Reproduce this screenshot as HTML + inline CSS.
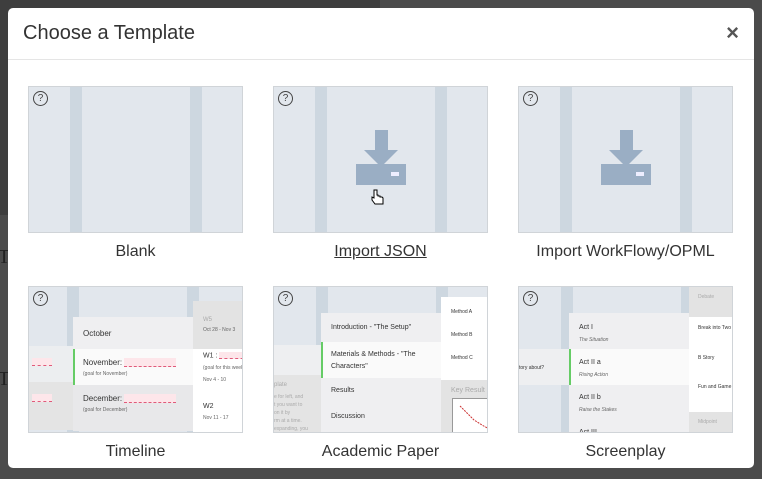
<!DOCTYPE html>
<html><head><meta charset="utf-8"><style>
*{box-sizing:border-box;margin:0;padding:0}
body{width:762px;height:479px;background:#4b4b4b;font-family:"Liberation Sans",sans-serif;position:relative;overflow:hidden}
.bgl{position:absolute;left:0;top:0;width:380px;height:215px;background:#3e3e3e}
.bgt{position:absolute;color:#222;font-family:"Liberation Serif",serif;font-size:20px}
.modal{position:absolute;left:8px;top:8px;width:746px;height:460px;background:#fff;border-radius:5px;overflow:hidden}
.hd{height:52px;border-bottom:1px solid #e5e5e5;position:relative}
.hd h1{font-weight:normal;font-size:20px;color:#333;position:absolute;left:15px;top:14px}
.x{position:absolute;right:15px;top:12px;font-size:22px;font-weight:bold;color:#555;line-height:26px}
.card{position:absolute;width:215px;height:147px;background:#e2e7ed;border:1px solid #d0d4d8;overflow:hidden}
.s{position:absolute;top:0;bottom:0;width:12px;background:#cdd7e0}
.q{position:absolute;left:4px;top:4px;width:15px;height:15px;border:1px solid #444;border-radius:50%;font-size:10px;text-align:center;line-height:13px;color:#444;z-index:5;background:transparent}
.lbl{position:absolute;width:215px;text-align:center;font-size:16px;color:#333}
.p{position:absolute;font-size:8px;color:#333;white-space:nowrap}
.sm{position:absolute;font-size:5px;color:#666;white-space:nowrap}
.pk{background:#fde6ea;border-bottom:1px dashed #e05a7a;display:inline-block;height:9px;vertical-align:middle}
</style></head><body>
<div class="bgl"></div>
<div class="bgt" style="left:-2px;top:246px">Th</div>
<div class="bgt" style="left:-2px;top:368px">Th</div>
<div class="modal">
 <div class="hd"><h1>Choose a Template</h1><div class="x">×</div></div>
</div>
<!-- Row 1 -->
<div class="card" style="left:28px;top:86px"><div class="q">?</div><div class="s" style="left:41px"></div><div class="s" style="left:161px"></div></div>
<div class="lbl" style="left:28px;top:243px">Blank</div>
<div class="card" style="left:273px;top:86px"><div class="q">?</div><div class="s" style="left:41px"></div><div class="s" style="left:161px"></div>
 <svg style="position:absolute;left:82px;top:43px" width="52" height="56"><path d="M19 0h13v20h10l-17 17l-17-17h11z" fill="#9aaec4"/><rect x="0" y="34" width="50" height="21" fill="#9aaec4"/><rect x="35" y="42" width="8" height="4" fill="#eef"/></svg>
 <svg style="position:absolute;left:96px;top:101px" width="16" height="18"><path d="M4 2v8l-2-1v3l3 4h8v-6l-1-1h-2v-1h-2v-1H7V2z" fill="#fff" stroke="#000" stroke-width="1"/></svg>
</div>
<div class="lbl" style="left:273px;top:243px;text-decoration:underline">Import JSON</div>
<div class="card" style="left:518px;top:86px"><div class="q">?</div><div class="s" style="left:41px"></div><div class="s" style="left:161px"></div>
 <svg style="position:absolute;left:82px;top:43px" width="52" height="56"><path d="M19 0h13v20h10l-17 17l-17-17h11z" fill="#9aaec4"/><rect x="0" y="34" width="50" height="21" fill="#9aaec4"/><rect x="35" y="42" width="8" height="4" fill="#eef"/></svg>
</div>
<div class="lbl" style="left:518px;top:243px">Import WorkFlowy/OPML</div>
<!-- Row 2 Timeline -->
<div class="card" style="left:28px;top:286px"><div class="q">?</div><div class="s" style="left:38px"></div><div class="s" style="left:158px"></div>
 <div style="position:absolute;left:0;top:59px;width:44px;height:36px;background:#eceef0"></div>
 <div style="position:absolute;left:0;top:95px;width:44px;height:48px;background:#e4e4e4"></div>
 <div style="position:absolute;left:3px;top:71px;width:20px;height:8px;background:#fde6ea;border-bottom:1px dashed #e05a7a"></div>
 <div style="position:absolute;left:3px;top:107px;width:20px;height:8px;background:#fde6ea;border-bottom:1px dashed #e05a7a"></div>
 <div style="position:absolute;left:44px;top:30px;width:120px;height:114px;background:#efeff1"></div>
 <div style="position:absolute;left:44px;top:62px;width:120px;height:36px;background:#fafafa;border-left:2px solid #6c6"></div>
 <div style="position:absolute;left:44px;top:98px;width:120px;height:46px;background:#e8e8ea"></div>
 <div class="p" style="left:54px;top:42px">October</div>
 <div class="p" style="left:54px;top:71px">November: <span class="pk" style="width:52px"></span></div>
 <div class="sm" style="left:54px;top:84px">(goal for November)</div>
 <div class="p" style="left:54px;top:107px">December: <span class="pk" style="width:52px"></span></div>
 <div class="sm" style="left:54px;top:120px">(goal for December)</div>
 <div style="position:absolute;left:164px;top:14px;width:51px;height:48px;background:#e3e3e3"></div>
 <div style="position:absolute;left:164px;top:62px;width:51px;height:85px;background:#fff;overflow:hidden">
  <div class="p" style="left:10px;top:3px;font-size:7px">W1 : <span class="pk" style="width:30px;height:7px"></span></div>
  <div class="sm" style="left:10px;top:16px">(goal for this week</div>
  <div class="sm" style="left:10px;top:28px">Nov 4 - 10</div>
  <div class="p" style="left:10px;top:54px;font-size:7px">W2</div>
  <div class="sm" style="left:10px;top:66px">Nov 11 - 17</div>
 </div>
 <div class="p" style="left:174px;top:30px;color:#aaa;font-size:6px">W5</div>
 <div class="sm" style="left:174px;top:40px">Oct 28 - Nov 3</div>
</div>
<div class="lbl" style="left:28px;top:443px">Timeline</div>
<!-- Academic -->
<div class="card" style="left:273px;top:286px"><div class="q">?</div><div class="s" style="left:42px"></div><div class="s" style="left:162px"></div>
 <div style="position:absolute;left:0;top:0;width:42px;height:58px;background:#e2e7ed"></div>
 <div style="position:absolute;left:0;top:58px;width:47px;height:30px;background:#eeeff1"></div>
 <div style="position:absolute;left:0;top:88px;width:47px;height:60px;background:#e4e4e4"></div>
 <div class="sm" style="left:0;top:95px;color:#aaa;font-size:6px">plate</div>
 <div class="sm" style="left:0;top:106px;color:#aaa;line-height:8px">e for left, and<br>t you want to<br>on it by<br>rm at a time.<br>expanding, you</div>
 <div style="position:absolute;left:47px;top:26px;width:120px;height:122px;background:#efeff1"></div>
 <div style="position:absolute;left:47px;top:55px;width:120px;height:36px;background:#fafafa;border-left:2px solid #6c6"></div>
 <div class="p" style="left:57px;top:37px;font-size:7px">Introduction - "The Setup"</div>
 <div class="p" style="left:57px;top:62px;font-size:7px;line-height:12px">Materials &amp; Methods - "The<br>Characters"</div>
 <div class="p" style="left:57px;top:100px;font-size:7px">Results</div>
 <div class="p" style="left:57px;top:126px;font-size:7px">Discussion</div>
 <div style="position:absolute;left:167px;top:10px;width:48px;height:83px;background:#fff"></div>
 <div style="position:absolute;left:167px;top:93px;width:48px;height:55px;background:#e3e3e3"></div>
 <div class="sm" style="left:177px;top:22px;font-size:5px;color:#333">Method A</div>
 <div class="sm" style="left:177px;top:45px;font-size:5px;color:#333">Method B</div>
 <div class="sm" style="left:177px;top:68px;font-size:5px;color:#333">Method C</div>
 <div class="p" style="left:177px;top:100px;color:#aaa;font-size:7px">Key Result</div>
 <svg style="position:absolute;left:178px;top:111px" width="37" height="36"><rect x="0.5" y="0.5" width="36" height="36" fill="#fff" stroke="#999"/><path d="M8 8l6 6l8 8l8 5l7 4" fill="none" stroke="#c33" stroke-width="1" stroke-dasharray="2 1"/></svg>
</div>
<div class="lbl" style="left:273px;top:443px">Academic Paper</div>
<!-- Screenplay -->
<div class="card" style="left:518px;top:286px"><div class="q">?</div><div class="s" style="left:42px"></div><div class="s" style="left:162px"></div>
 <div style="position:absolute;left:0;top:62px;width:50px;height:36px;background:#eeeff1"></div>
 <div class="sm" style="left:0;top:78px;color:#333">tory about?</div>
 <div style="position:absolute;left:50px;top:26px;width:120px;height:122px;background:#efeff1"></div>
 <div style="position:absolute;left:50px;top:62px;width:120px;height:36px;background:#fafafa;border-left:2px solid #6c6"></div>
 <div class="p" style="left:60px;top:37px;font-size:7px">Act I</div><div class="sm" style="left:60px;top:50px;font-style:italic">The Situation</div>
 <div class="p" style="left:60px;top:72px;font-size:7px">Act II a</div><div class="sm" style="left:60px;top:85px;font-style:italic">Rising Action</div>
 <div class="p" style="left:60px;top:107px;font-size:7px">Act II b</div><div class="sm" style="left:60px;top:120px;font-style:italic">Raise the Stakes</div>
 <div class="p" style="left:60px;top:142px;font-size:7px">Act III</div>
 <div style="position:absolute;left:170px;top:0;width:45px;height:30px;background:#e3e3e3"></div>
 <div style="position:absolute;left:170px;top:30px;width:45px;height:95px;background:#fff"></div>
 <div style="position:absolute;left:170px;top:125px;width:45px;height:25px;background:#e3e3e3"></div>
 <div class="sm" style="left:179px;top:7px;font-size:5px;color:#aaa">Debate</div>
 <div class="sm" style="left:179px;top:38px;font-size:5px;color:#333">Break into Two</div>
 <div class="sm" style="left:179px;top:68px;font-size:5px;color:#333">B Story</div>
 <div class="sm" style="left:179px;top:97px;font-size:5px;color:#333">Fun and Game</div>
 <div class="sm" style="left:179px;top:132px;font-size:5px;color:#aaa">Midpoint</div>
</div>
<div class="lbl" style="left:518px;top:443px">Screenplay</div>
</body></html>
